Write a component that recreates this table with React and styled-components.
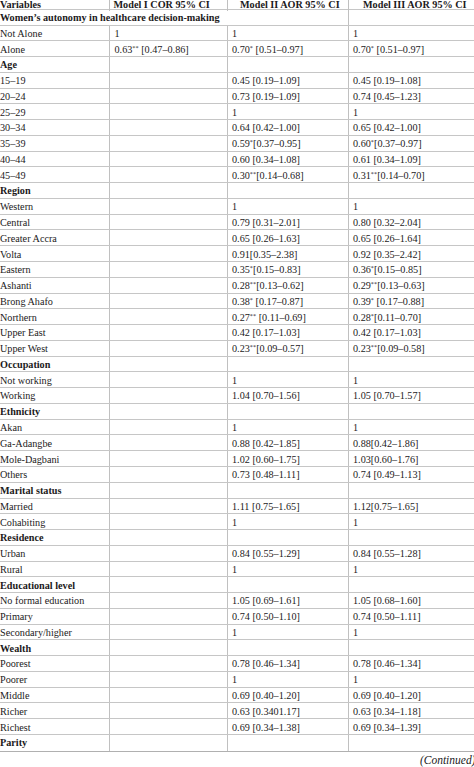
import React from "react";
import styled, { createGlobalStyle } from "styled-components";

const Global = createGlobalStyle`
  html, body { margin: 0; padding: 0; background: #fff; }
  body { width: 474px; height: 767px; overflow: hidden; }
  #root { width: 474px; }
`;

const Page = styled.div`
  width: 474px;
  height: 767px;
  overflow: hidden;
  font-family: "Liberation Serif", "Times New Roman", serif;
  color: #1c1a1b;
  font-size: 10.2px;
`;

const Table = styled.div`
  margin-top: -6px;
  display: flex;
  flex-direction: column;
  border-bottom: 1.6px solid #b0b0b0;
`;

const Row = styled.div`
  display: grid;
  grid-template-columns: 109.5px 118.5px 121px 1fr;
  height: 15.77px;
  box-sizing: border-box;
  border-bottom: ${(p) => (p.$last ? "0" : "1.6px solid #c6c6c6")};
`;

const Cell = styled.div`
  box-sizing: border-box;
  padding-left: ${(p) => p.$pad || 0}px;
  padding-top: ${(p) => (p.$head ? 4.9 : 2.3)}px;
  line-height: 12px;
  white-space: nowrap;
  overflow: visible;
  font-weight: ${(p) => (p.$bold ? 700 : 400)};
  border-right: ${(p) => (p.$noline ? "0" : "1px solid #c0c0c0")};
  grid-column: ${(p) => (p.$span ? `span ${p.$span}` : "auto")};
`;

const Sup = styled.sup`
  font-size: 0.62em;
  vertical-align: 0;
  position: relative;
  top: -0.45em;
  line-height: 0;
`;

const Continued = styled.div`
  text-align: right;
  margin-right: -1.5px;
  margin-top: 1px;
  font-style: italic;
  font-size: 11.5px;
  line-height: 14px;
`;

const Val = ({ v }) => {
  if (!v) return null;
  const m = v.match(/^([\d.]+)(\*+)?(.*)$/);
  if (!m) return v;
  return (
    <>
      {m[1]}
      {m[2] && <Sup>{m[2]}</Sup>}
      {m[3]}
    </>
  );
};

const rows = [
  { t: "w", a: "Women’s autonomy in healthcare decision-making" },
  { a: "Not Alone", b: "1", c: "1", d: "1" },
  { a: "Alone", b: "0.63** [0.47–0.86]", c: "0.70* [0.51–0.97]", d: "0.70* [0.51–0.97]" },
  { t: "h", a: "Age" },
  { a: "15–19", c: "0.45 [0.19–1.09]", d: "0.45 [0.19–1.08]" },
  { a: "20–24", c: "0.73 [0.19–1.09]", d: "0.74 [0.45–1.23]" },
  { a: "25–29", c: "1", d: "1" },
  { a: "30–34", c: "0.64 [0.42–1.00]", d: "0.65 [0.42–1.00]" },
  { a: "35–39", c: "0.59*[0.37–0.95]", d: "0.60*[0.37–0.97]" },
  { a: "40–44", c: "0.60 [0.34–1.08]", d: "0.61 [0.34–1.09]" },
  { a: "45–49", c: "0.30**[0.14–0.68]", d: "0.31**[0.14–0.70]" },
  { t: "h", a: "Region" },
  { a: "Western", c: "1", d: "1" },
  { a: "Central", c: "0.79 [0.31–2.01]", d: "0.80 [0.32–2.04]" },
  { a: "Greater Accra", c: "0.65 [0.26–1.63]", d: "0.65 [0.26–1.64]" },
  { a: "Volta", c: "0.91[0.35–2.38]", d: "0.92 [0.35–2.42]" },
  { a: "Eastern", c: "0.35*[0.15–0.83]", d: "0.36*[0.15–0.85]" },
  { a: "Ashanti", c: "0.28**[0.13–0.62]", d: "0.29**[0.13–0.63]" },
  { a: "Brong Ahafo", c: "0.38* [0.17–0.87]", d: "0.39* [0.17–0.88]" },
  { a: "Northern", c: "0.27** [0.11–0.69]", d: "0.28*[0.11–0.70]" },
  { a: "Upper East", c: "0.42 [0.17–1.03]", d: "0.42 [0.17–1.03]" },
  { a: "Upper West", c: "0.23**[0.09–0.57]", d: "0.23**[0.09–0.58]" },
  { t: "h", a: "Occupation" },
  { a: "Not working", c: "1", d: "1" },
  { a: "Working", c: "1.04 [0.70–1.56]", d: "1.05 [0.70–1.57]" },
  { t: "h", a: "Ethnicity" },
  { a: "Akan", c: "1", d: "1" },
  { a: "Ga-Adangbe", c: "0.88 [0.42–1.85]", d: "0.88[0.42–1.86]" },
  { a: "Mole-Dagbani", c: "1.02 [0.60–1.75]", d: "1.03[0.60–1.76]" },
  { a: "Others", c: "0.73 [0.48–1.11]", d: "0.74 [0.49–1.13]" },
  { t: "h", a: "Marital status" },
  { a: "Married", c: "1.11 [0.75–1.65]", d: "1.12[0.75–1.65]" },
  { a: "Cohabiting", c: "1", d: "1" },
  { t: "h", a: "Residence" },
  { a: "Urban", c: "0.84 [0.55–1.29]", d: "0.84 [0.55–1.28]" },
  { a: "Rural", c: "1", d: "1" },
  { t: "h", a: "Educational level" },
  { a: "No formal education", c: "1.05 [0.69–1.61]", d: "1.05 [0.68–1.60]" },
  { a: "Primary", c: "0.74 [0.50–1.10]", d: "0.74 [0.50–1.11]" },
  { a: "Secondary/higher", c: "1", d: "1" },
  { t: "h", a: "Wealth" },
  { a: "Poorest", c: "0.78 [0.46–1.34]", d: "0.78 [0.46–1.34]" },
  { a: "Poorer", c: "1", d: "1" },
  { a: "Middle", c: "0.69 [0.40–1.20]", d: "0.69 [0.40–1.20]" },
  { a: "Richer", c: "0.63 [0.3401.17]", d: "0.63 [0.34–1.18]" },
  { a: "Richest", c: "0.69 [0.34–1.38]", d: "0.69 [0.34–1.39]" },
  { t: "h", a: "Parity" },
];

export default function App() {
  return (
    <Page>
      <Global />
      <Table>
        <Row>
          <Cell $head $bold>Variables</Cell>
          <Cell $head $bold $pad={4}>Model I COR 95% CI</Cell>
          <Cell $head $bold $pad={12}>Model II AOR 95% CI</Cell>
          <Cell $head $bold $pad={14} $noline>Model III AOR 95% CI</Cell>
        </Row>
        {rows.map((r, i) => {
          const last = i === rows.length - 1;
          if (r.t === "w") {
            return (
              <Row key={i} $last={last}>
                <Cell $bold $span={3}>{r.a}</Cell>
                <Cell $noline />
              </Row>
            );
          }
          return (
            <Row key={i} $last={last}>
              <Cell $bold={r.t === "h"}>{r.a}</Cell>
              <Cell $pad={5}><Val v={r.b} /></Cell>
              <Cell $pad={4}><Val v={r.c} /></Cell>
              <Cell $pad={4} $noline><Val v={r.d} /></Cell>
            </Row>
          );
        })}
      </Table>
      <Continued>(Continued)</Continued>
    </Page>
  );
}
